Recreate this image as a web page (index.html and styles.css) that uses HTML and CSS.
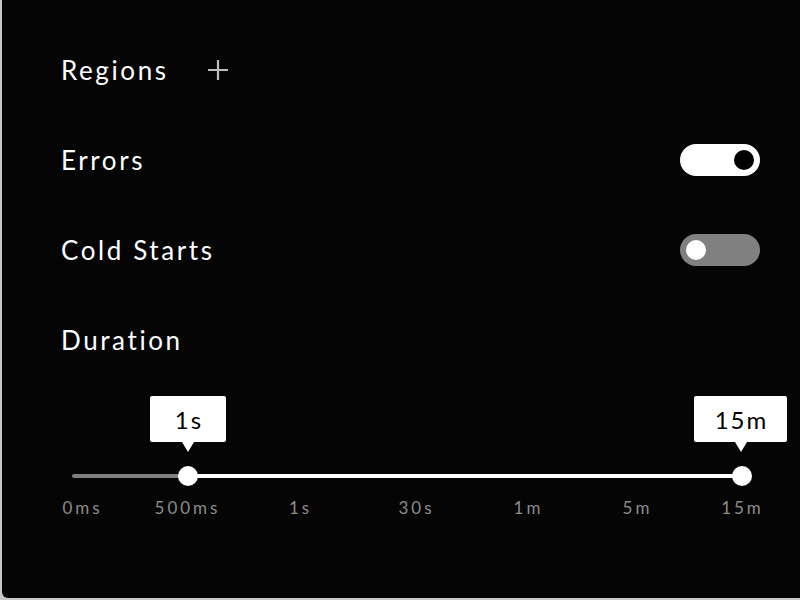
FILE: index.html
```html
<!DOCTYPE html>
<html>
<head>
<meta charset="utf-8">
<link rel="stylesheet" href="styles.css">
</head>
<body>
<div class="panel">
  <div class="row">
    <div class="title-group">
      <span class="title">Regions</span>
      <svg class="plus" width="22" height="22" viewBox="0 0 22 22"><path d="M11 1v20M1 11h20" stroke="#bdbdbd" stroke-width="2.2" fill="none"/></svg>
    </div>
  </div>
  <div class="row">
    <span class="title">Errors</span>
    <div class="toggle on"><span class="knob"></span></div>
  </div>
  <div class="row">
    <span class="title">Cold Starts</span>
    <div class="toggle off"><span class="knob"></span></div>
  </div>
  <div class="row">
    <span class="title">Duration</span>
  </div>
  <div class="slider">
    <div class="track"></div>
    <div class="track-active" style="left:127px;width:554px"></div>
    <div class="tip" style="left:89px;width:76px">1s</div>
    <div class="tip" style="left:633px;width:93px">15m</div>
    <div class="handle" style="left:117px"></div>
    <div class="handle" style="left:671px"></div>
    <span class="tick" style="left:20px">0ms</span>
    <span class="tick" style="left:125px">500ms</span>
    <span class="tick" style="left:238px">1s</span>
    <span class="tick" style="left:354px">30s</span>
    <span class="tick" style="left:466px">1m</span>
    <span class="tick" style="left:575px">5m</span>
    <span class="tick" style="left:680px">15m</span>
  </div>
</div>
</body>
</html>
```
FILE: styles.css
```css
html, body {
  margin: 0;
  padding: 0;
}
body {
  background: #c8c8c8;
  width: 800px;
  height: 600px;
  overflow: hidden;
  font-family: "Lato", "Noto Sans", sans-serif;
}
.panel {
  margin-left: 2px;
  height: 598px;
  box-sizing: border-box;
  background: #050505;
  border-bottom-left-radius: 6px;
  padding: 25px 40px 0 59px;
  color: #fff;
}
.row {
  height: 90px;
  display: flex;
  align-items: center;
  justify-content: space-between;
}
.title-group {
  display: flex;
  align-items: center;
  gap: 38px;
}
.title {
  font-size: 26px;
  letter-spacing: 2.6px;
  line-height: 30px;
}
.plus {
  display: block;
}
.toggle {
  width: 80px;
  height: 32px;
  border-radius: 16px;
  box-sizing: border-box;
  padding: 6px;
  display: flex;
}
.toggle.on {
  background: #fff;
  justify-content: flex-end;
}
.toggle.off {
  background: #808080;
  justify-content: flex-start;
}
.knob {
  width: 20px;
  height: 20px;
  border-radius: 50%;
}
.toggle.on .knob { background: #000; }
.toggle.off .knob { background: #fff; }
.slider {
  position: relative;
  height: 140px;
}
.track {
  position: absolute;
  left: 11px;
  width: 670px;
  top: 89px;
  height: 4px;
  border-radius: 2px;
  background: #808080;
}
.track-active {
  position: absolute;
  top: 89px;
  height: 4px;
  background: #fff;
}
.handle {
  position: absolute;
  top: 81px;
  width: 20px;
  height: 20px;
  border-radius: 50%;
  background: #fff;
}
.tip {
  position: absolute;
  top: 11px;
  height: 46px;
  box-sizing: border-box;
  background: #fff;
  color: #000;
  border-radius: 2px;
  font-size: 24px;
  letter-spacing: 2px;
  padding-left: 2px;
  line-height: 48px;
  text-align: center;
}
.tip::after {
  content: "";
  position: absolute;
  left: 50%;
  margin-left: -6px;
  top: 46px;
  border-left: 6px solid transparent;
  border-right: 6px solid transparent;
  border-top: 10px solid #fff;
}
.tick {
  position: absolute;
  top: 113px;
  font-size: 17px;
  line-height: 20px;
  letter-spacing: 3px;
  padding-left: 3px;
  color: #8c8c8c;
  transform: translateX(-50%);
  white-space: nowrap;
}
```
